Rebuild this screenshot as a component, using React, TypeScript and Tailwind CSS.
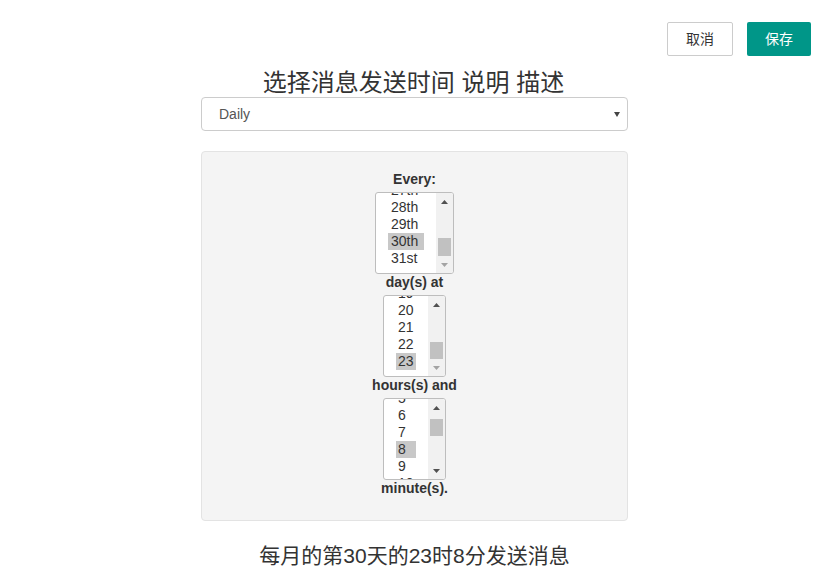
import React from "react";

type ListBoxProps = {
  items: string[];
  selected: string;
  boxClass: string;
  listClass: string;
  optClass: string;
  thumbClass: string;
  upDisabled?: boolean;
  downDisabled?: boolean;
};

const Arrow = ({ up, disabled }: { up?: boolean; disabled?: boolean }) => (
  <div className="h-[17px] flex items-center justify-center">
    <svg width="7" height="4" viewBox="0 0 7 4">
      <path
        d={up ? "M3.5 0 L7 4 L0 4 Z" : "M0 0 L7 0 L3.5 4 Z"}
        fill={disabled ? "#a3a3a3" : "#505050"}
      />
    </svg>
  </div>
);

const ListBox: React.FC<ListBoxProps> = ({
  items,
  selected,
  boxClass,
  listClass,
  optClass,
  thumbClass,
  upDisabled,
  downDisabled,
}) => (
  <div className={`flex h-[82px] border border-[#bdbdbd] rounded-[3px] bg-white overflow-hidden ${boxClass}`}>
    <div className="flex-1 overflow-hidden pl-[12px]">
      <div className={listClass}>
        {items.map((it) => (
          <div
            key={it}
            className={`h-[17px] leading-[17px] text-[14px] text-[#333] ${optClass} ${
              it === selected ? "bg-[#c8c8c8]" : ""
            }`}
          >
            {it}
          </div>
        ))}
      </div>
    </div>
    {/* scrollbar */}
    <div className="w-[17px] bg-[#f1f1f1] flex flex-col">
      <Arrow up disabled={upDisabled} />
      <div className="flex-1 flex flex-col">
        <div className={`mx-[2px] bg-[#c1c1c1] ${thumbClass}`}></div>
      </div>
      <Arrow disabled={downDisabled} />
    </div>
  </div>
);

const Label = ({ children }: { children: React.ReactNode }) => (
  <div className="h-5 leading-4 text-[14px] font-bold text-[#333]">{children}</div>
);

export default function App() {
  return (
    <div className="w-[827px] h-[577px] bg-white font-['Liberation_Sans','Noto_Sans_CJK_SC',sans-serif] text-[#333]">
      {/* top buttons */}
      <div className="flex justify-end gap-[14px] pt-[22px] pr-[16px]">
        <button className="w-[66px] h-[34px] border border-[#ccc] rounded-[2px] bg-white text-[14px] text-[#333]">
          取消
        </button>
        <button className="w-[64px] h-[34px] rounded-[2px] bg-[#009688] text-[14px] text-white">
          保存
        </button>
      </div>

      <h1 className="mt-[13px] text-center text-[24px] leading-[28px] font-normal text-[#333]">
        选择消息发送时间 说明 描述
      </h1>

      <div className="w-[427px] ml-[201px]">
        {/* frequency select */}
        <div className="h-[34px] border border-[#ccc] rounded-[4px] bg-white flex items-center justify-between pl-[17px] pr-[7px]">
          <span className="text-[14px] text-[#555]">Daily</span>
          <svg width="6" height="5" viewBox="0 0 6 5">
            <path d="M0 0 L6 0 L3 5 Z" fill="#444" />
          </svg>
        </div>

        {/* cron panel */}
        <div className="mt-[20px] h-[370px] border border-[#e3e3e3] rounded-[4px] bg-[#f4f4f4] flex flex-col items-center pt-[19px]">
          <Label>Every:</Label>
          <ListBox
            items={["27th", "28th", "29th", "30th", "31st"]}
            selected="30th"
            boxClass="w-[79px] mt-[1px]"
            listClass="-mt-[11px]"
            optClass="w-[36px] pl-[3px]"
            thumbClass="mt-[28px] h-[18px]"
            downDisabled
          />
          <Label>day(s) at</Label>
          <ListBox
            items={["19", "20", "21", "22", "23"]}
            selected="23"
            boxClass="w-[63px] mt-[1px]"
            listClass="-mt-[11px]"
            optClass="w-[20px] pl-[2px]"
            thumbClass="mt-[29px] h-[17px]"
            downDisabled
          />
          <Label>hours(s) and</Label>
          <ListBox
            items={["5", "6", "7", "8", "9", "10"]}
            selected="8"
            boxClass="w-[63px] mt-[1px]"
            listClass="-mt-[9px]"
            optClass="w-[20px] pl-[2px]"
            thumbClass="mt-[3px] h-[17px]"
          />
          <Label>minute(s).</Label>
        </div>

        <p className="mt-[21px] text-center text-[21px] leading-[28px] text-[#333]">
          每月的第30天的23时8分发送消息
        </p>
      </div>
    </div>
  );
}
